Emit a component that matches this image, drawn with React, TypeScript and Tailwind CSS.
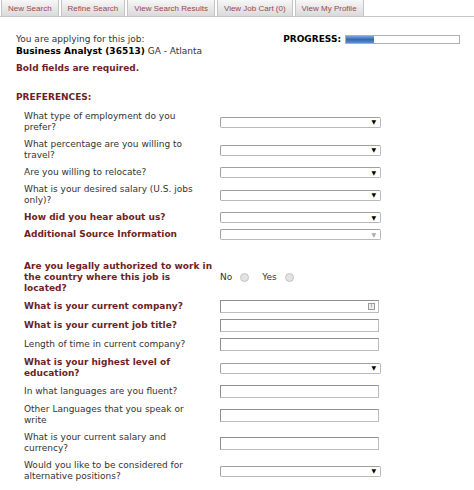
import React from "react";

type Row = { lines: string[]; bold?: boolean; kind: "select" | "text" | "radio" | "lookup"; dim?: boolean };

const preferences: Row[] = [
  { lines: ["What type of employment do you", "prefer?"], kind: "select" },
  { lines: ["What percentage are you willing to", "travel?"], kind: "select" },
  { lines: ["Are you willing to relocate?"], kind: "select" },
  { lines: ["What is your desired salary (U.S. jobs", "only)?"], kind: "select" },
  { lines: ["How did you hear about us?"], bold: true, kind: "select" },
  { lines: ["Additional Source Information"], bold: true, kind: "select", dim: true },
];

const background: Row[] = [
  { lines: ["Are you legally authorized to work in", "the country where this job is", "located?"], bold: true, kind: "radio" },
  { lines: ["What is your current company?"], bold: true, kind: "lookup" },
  { lines: ["What is your current job title?"], bold: true, kind: "text" },
  { lines: ["Length of time in current company?"], kind: "text" },
  { lines: ["What is your highest level of", "education?"], bold: true, kind: "select" },
  { lines: ["In what languages are you fluent?"], kind: "text" },
  { lines: ["Other Languages that you speak or", "write"], kind: "text" },
  { lines: ["What is your current salary and", "currency?"], kind: "text" },
  { lines: ["Would you like to be considered for", "alternative positions?"], kind: "select" },
];

const tabs = ["New Search", "Refine Search", "View Search Results", "View Job Cart (0)", "View My Profile"];

function SelectBox({ dim }: { dim?: boolean }) {
  return (
    <div className="flex h-[11px] w-[161px] shrink-0 items-center justify-end rounded-[2px] border border-[#b9b9b9] border-t-[#a0a0a0] border-l-[#a0a0a0] bg-white pr-[4px]">
      <span className={`text-[6px] leading-none ${dim ? "text-[#aaa]" : "text-black"}`}>▼</span>
    </div>
  );
}

function TextBox({ lookup }: { lookup?: boolean }) {
  return (
    <div className="flex h-[13px] w-[159px] shrink-0 items-center justify-end border border-[#bdbdbd] border-t-[#8f8f8f] border-l-[#8f8f8f] bg-white pr-[3px]">
      {lookup ? (
        <span className="flex h-[7px] w-[7px] items-center justify-center border border-[#999] bg-[#eee] text-[5px] leading-none text-[#555]">!</span>
      ) : null}
    </div>
  );
}

function Radio() {
  return <span className="inline-block h-[9px] w-[9px] rounded-full border border-[#c4c4c4] bg-[#e3e3e3]" />;
}

function Control({ row }: { row: Row }) {
  if (row.kind === "select") return <SelectBox dim={row.dim} />;
  if (row.kind === "lookup") return <TextBox lookup />;
  if (row.kind === "text") return <TextBox />;
  return (
    <div className="flex items-center gap-[8px] text-[#333]">
      <span>No</span>
      <Radio />
      <span className="ml-[5px]">Yes</span>
      <Radio />
    </div>
  );
}

function FormRow({ row }: { row: Row }) {
  return (
    <div className="flex items-center">
      <div className={`w-[204px] shrink-0 whitespace-nowrap pl-[8px] ${row.bold ? "font-bold text-[#6e1f26]" : "text-[#333]"}`}>
        {row.lines.map((line) => (
          <div key={line}>{line}</div>
        ))}
      </div>
      <Control row={row} />
    </div>
  );
}

export default function App() {
  return (
    <div className="h-[490px] w-[474px] overflow-hidden bg-white text-[9px] leading-[11px]" style={{ fontFamily: '"DejaVu Sans", Verdana, sans-serif' }}>
      <div className="flex h-[17px] items-end gap-[2px] border-b border-[#c9c9c9] pl-[1px]" style={{ fontFamily: '"Liberation Sans", Arial, sans-serif' }}>
        {tabs.map((tab) => (
          <div key={tab} className="flex h-[17px] items-center border border-b-0 border-[#c4c4c4] bg-gradient-to-b from-[#f7f7f7] to-[#dadada] px-[6px] text-[8px] text-[#9a4650]">
            {tab}
          </div>
        ))}
      </div>

      <div className="px-[16px]">
        <div className="mt-[17px] flex justify-between">
          <div className="text-[#333]">
            <div>You are applying for this job:</div>
            <div className="mt-[1px] text-black">
              <span className="font-bold">Business Analyst (36513)</span> <span className="text-[#333]">GA - Atlanta</span>
            </div>
          </div>
          <div className="-mr-[2px] flex items-start gap-[4px]">
            <span className="font-bold text-black">PROGRESS:</span>
            <div className="mt-[1px] h-[9px] w-[115px] border border-[#b0b0b0] bg-white">
              <div className="h-full w-[28px] bg-gradient-to-b from-[#7aa6d6] via-[#2f6cb3] to-[#5b8fcb]" />
            </div>
          </div>
        </div>

        <div className="mt-[6px] font-bold text-[#6e1f26]">Bold fields are required.</div>

        <div className="mt-[18px] font-bold text-[#6e1f26]">PREFERENCES:</div>

        <div className="mt-[8px] flex flex-col gap-[6px]">
          {preferences.map((row) => (
            <FormRow key={row.lines[0]} row={row} />
          ))}
        </div>

        <div className="mt-[21px] flex flex-col gap-[6px]">
          {background.map((row) => (
            <FormRow key={row.lines[0]} row={row} />
          ))}
        </div>
      </div>
    </div>
  );
}
